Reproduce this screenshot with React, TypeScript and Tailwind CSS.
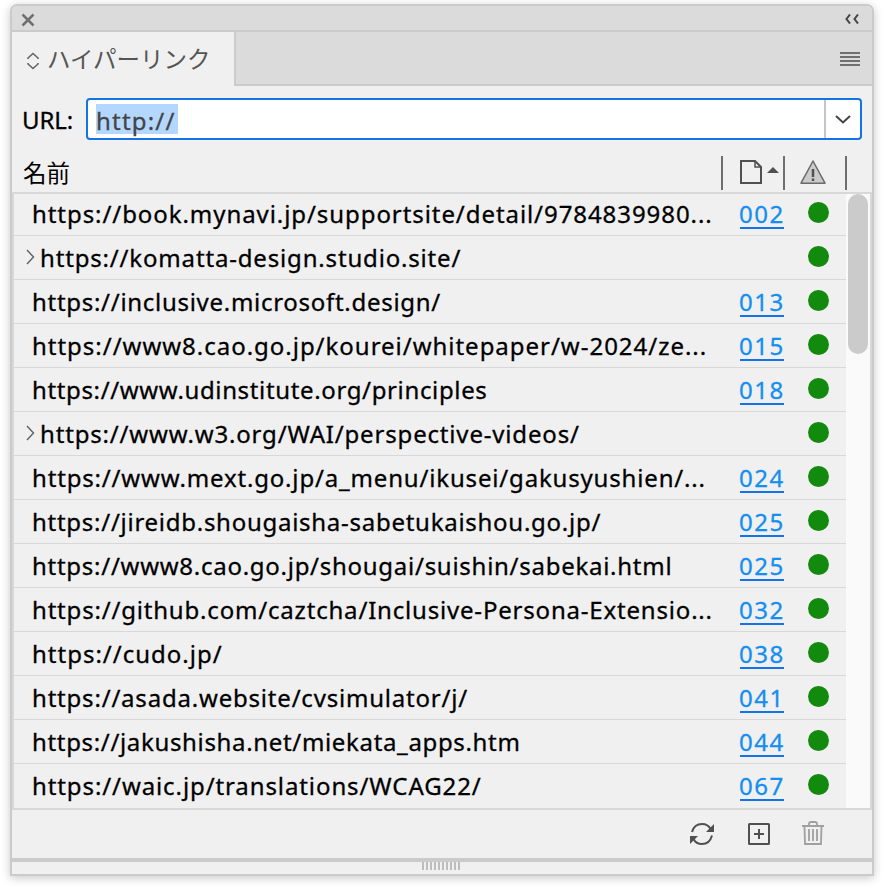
import clsx from 'clsx';

interface Link {
  url: string;
  tracking: string;
  page?: string;
  group?: boolean;
}

const links: Link[] = [
  { url: 'https://book.mynavi.jp/supportsite/detail/9784839980...', page: '002', tracking: 'tracking-[0.93px]' },
  { url: 'https://komatta-design.studio.site/', group: true, tracking: 'tracking-[0.83px]' },
  { url: 'https://inclusive.microsoft.design/', page: '013', tracking: 'tracking-[0.71px]' },
  { url: 'https://www8.cao.go.jp/kourei/whitepaper/w-2024/ze...', page: '015', tracking: 'tracking-[0.98px]' },
  { url: 'https://www.udinstitute.org/principles', page: '018', tracking: 'tracking-[0.64px]' },
  { url: 'https://www.w3.org/WAI/perspective-videos/', group: true, tracking: 'tracking-[0.83px]' },
  { url: 'https://www.mext.go.jp/a_menu/ikusei/gakusyushien/...', page: '024', tracking: 'tracking-[0.83px]' },
  { url: 'https://jireidb.shougaisha-sabetukaishou.go.jp/', page: '025', tracking: 'tracking-[0.73px]' },
  { url: 'https://www8.cao.go.jp/shougai/suishin/sabekai.html', page: '025', tracking: 'tracking-[0.73px]' },
  { url: 'https://github.com/caztcha/Inclusive-Persona-Extensio...', page: '032', tracking: 'tracking-[0.81px]' },
  { url: 'https://cudo.jp/', page: '038', tracking: 'tracking-[1px]' },
  { url: 'https://asada.website/cvsimulator/j/', page: '041', tracking: 'tracking-[0.8px]' },
  { url: 'https://jakushisha.net/miekata_apps.htm', page: '044', tracking: 'tracking-[0.66px]' },
  { url: 'https://waic.jp/translations/WCAG22/', page: '067', tracking: 'tracking-[0.9px]' },
];

const TitleBar = () => (
  <div className="flex h-[26px] shrink-0 items-center justify-between border-b-2 border-[#cbcbcb] bg-[#dbdbdb] pl-[9px] pr-[13px]">
    <svg width="14" height="14" viewBox="0 0 14 14" className="mt-1" stroke="#707070" strokeWidth="2.5">
      <path d="M1.5 1.5l11 11M12.5 1.5l-11 11" />
    </svg>
    <svg width="14" height="10" viewBox="0 0 14 10" className="mt-0.5" fill="none" stroke="#444" strokeWidth="2">
      <path d="M5 .5L1.500 5L5 9.500M13 .5L9.500 5l3.500 4.500" />
    </svg>
  </div>
);

const Tabs = () => (
  <div className="flex h-[54px] shrink-0">
    <div className="flex w-[224px] items-center border-r-2 border-[#cbcbcb] pl-[15px]">
      <svg width="12" height="18" viewBox="0 0 12 18" className="mt-1" fill="none" stroke="#666" strokeWidth="1.6">
        <path d="M1 7V6l5-4.500L11 6v1M1 11v1l5 4.500 5-4.500v-1" />
      </svg>
      <span className="-mt-[3px] ml-2 whitespace-nowrap font-['Noto_Sans_CJK_JP',sans-serif] text-[23.5px] leading-8 text-[#555]">ハイパーリンク</span>
    </div>
    <div className="flex flex-1 items-center justify-end border-b-2 border-[#cbcbcb] bg-[#dbdbdb] pr-3">
      <div className="mt-0.5 flex w-5 flex-col gap-0.5">
        <div className="h-0.5 bg-[#707070]" />
        <div className="h-0.5 bg-[#707070]" />
        <div className="h-0.5 bg-[#707070]" />
        <div className="h-0.5 bg-[#707070]" />
      </div>
    </div>
  </div>
);

const UrlField = () => (
  <div className="flex h-[54px] shrink-0 items-start pl-2.5 pr-2.5 pt-3">
    <span className="w-16 pt-1.5 text-2xl tracking-[-0.1px] [-webkit-text-stroke:0.3px]">URL:</span>
    <div className="flex h-[42px] flex-1 overflow-hidden rounded border-2 border-[#1473e6] bg-white">
      <div className="flex flex-1 items-start pl-2 pt-1">
        <span className="h-[30px] w-[82px] whitespace-nowrap bg-[#b3d7ff] text-2xl leading-[33px] tracking-[1.2px] text-[#444] [-webkit-text-stroke:0.3px]">http://</span>
      </div>
      <div className="flex w-9 items-center justify-center border-l-2 border-[#c6c6c6]">
        <svg width="16" height="9" viewBox="0 0 16 9" fill="none" stroke="#444" strokeWidth="2">
          <path d="M1 1l7 6.500L15 1" />
        </svg>
      </div>
    </div>
  </div>
);

const ListHeader = () => (
  <div className="flex h-[54px] shrink-0 items-end border-b-2 border-[#d8d8d8] pl-[11px] pb-0.5">
    <span className="w-[698px] pb-0.5 font-['Noto_Sans_CJK_JP',sans-serif] text-[23.5px] leading-8">名前</span>
    <div className="flex h-[34px] w-[62px] items-center border-l-2 border-[#6e6e6e] pl-[17px]">
      <svg width="22" height="24" viewBox="0 0 22 24" className="-mt-0.5" fill="none" stroke="#505050" strokeWidth="2">
        <path d="M1 1h14l6 6v16H1z" />
        <path d="M15 1v6h6" strokeWidth="1.5" />
      </svg>
      <svg width="12" height="6" viewBox="0 0 12 6" className="-mt-1.5 ml-[5px]" fill="#505050">
        <path d="M0 6L6 0l6 6z" />
      </svg>
    </div>
    <div className="flex h-[34px] w-16 items-center border-x-2 border-[#6e6e6e] pl-[15px]">
      <svg width="26" height="24" viewBox="0 0 26 24" className="-mt-0.5">
        <path d="M13 1L25 23.200H1z" fill="#cbcbcb" stroke="#6a6a6a" strokeWidth="1.5" strokeLinejoin="round" />
        <path d="M13 9v8M13 18.500v2.500" stroke="#505050" strokeWidth="2.5" />
      </svg>
    </div>
  </div>
);

const Row = ({ link }: { link: Link }) => (
  <div className="flex h-11 shrink-0 border-b border-[#d8d8d8] pt-0.5 first:h-[42px] first:pt-0 last:border-b-0">
    <div className={clsx('flex w-[725px] shrink-0', link.group ? 'pl-3' : 'pl-[18px]')}>
      {link.group && (
        <svg width="9" height="16" viewBox="0 0 9 16" className="mr-[5px] mt-[11px]" fill="none" stroke="#666" strokeWidth="1.5">
          <path d="M1 1l6.500 7L1 15" />
        </svg>
      )}
      <span className={clsx('whitespace-nowrap text-2xl leading-[39px] [-webkit-text-stroke:0.3px]', link.tracking)}>{link.url}</span>
    </div>
    <div className="w-[69px] shrink-0">
      {link.page && (
        <div className="ml-px h-[35px] w-11 border-b-2 border-[#1473e6]">
          <span className="-ml-px text-2xl leading-[39px] tracking-[1.5px] text-[#148ef0] [-webkit-text-stroke:0.3px]">{link.page}</span>
        </div>
      )}
    </div>
    <div className="mt-2 h-[21px] w-[21px] rounded-full bg-[#128a0e]" />
  </div>
);

const Footer = () => (
  <div className="flex h-12 shrink-0 items-center pl-[678px]">
    <svg width="24" height="24" viewBox="0 0 24 24" fill="none" stroke="#505050" strokeWidth="2">
      <path d="M2 10C3.500 4.500 7 2 12 2c4 0 7 2 8.500 5M22 13.500C20.500 19 17 22 12 22c-4 0-7-2-8.500-5" />
      <path d="M24 2v8h-8zM0 22v-8h8z" fill="#505050" stroke="none" />
    </svg>
    <svg width="22" height="22" viewBox="0 0 22 22" className="ml-[34px]" fill="none" stroke="#505050" strokeWidth="2">
      <rect x="1" y="1" width="20" height="20" rx="0.5" />
      <path d="M6 11h10M11 6v10" />
    </svg>
    <svg width="22" height="24" viewBox="0 0 22 24" className="-mt-0.5 ml-8" fill="none" stroke="#a0a0a0" strokeWidth="1.8">
      <path d="M0 5h22M7 5V3q0-2 2-2h4q2 0 2 2v2M2.500 5l.5 18h16l.5-18M7 8v12M11 8v12M15 8v12" />
    </svg>
  </div>
);

const App = () => (
  <div className="h-[890px] w-[884px] overflow-hidden bg-white pl-2.5 pt-1 font-['Noto_Sans','Noto_Sans_CJK_JP',sans-serif] text-black">
    <div className="flex h-[872px] w-[864px] flex-col overflow-hidden rounded-t-[7px] border-2 border-[#cbcbcb] bg-[#f0f0f0] shadow-[0_2px_10px_rgba(0,0,0,0.22)]">
      <TitleBar />
      <Tabs />
      <UrlField />
      <ListHeader />
      <div className="flex h-[616px] shrink-0 border-x-2 border-b-2 border-[#d8d8d8]">
        <div className="w-[832px] overflow-hidden">
          {links.map((link) => (
            <Row key={link.url} link={link} />
          ))}
        </div>
        <div className="flex-1 bg-[#fafafa] pl-0.5">
          <div className="h-40 w-5 rounded-full bg-[#cbcbcb]" />
        </div>
      </div>
      <Footer />
      <div className="flex flex-1 justify-center border-t-4 border-[#cbcbcb]">
        <div className="-ml-0.5 flex h-2 gap-0.5">
          {Array.from({ length: 10 }, (_, i) => (
            <div key={i} className="w-0.5 bg-[#bdbdbd]" />
          ))}
        </div>
      </div>
    </div>
  </div>
);

export default App;
